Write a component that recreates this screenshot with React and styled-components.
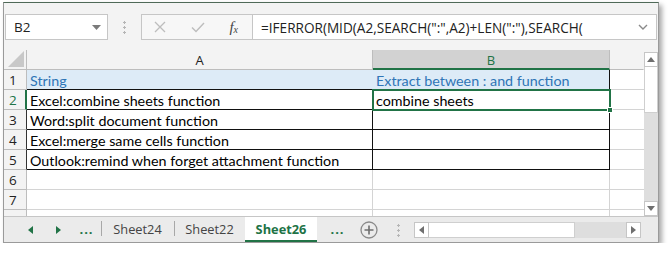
import React from "react";
import styled, { createGlobalStyle, css } from "styled-components";

const GlobalStyle = createGlobalStyle`
  * { box-sizing: border-box; }
  body {
    margin: 0;
    background: #fff;
    font-family: "Open Sans", "Noto Sans", sans-serif;
  }
`;

const GREEN = "#217346";
const GRID = "#d4d4d4";
const HEAD_LINE = "#bdbdbd";

const rows = [
  { a: "String", b: "Extract between : and function", head: true },
  { a: "Excel:combine sheets function", b: "combine sheets", selected: true },
  { a: "Word:split document function", b: "" },
  { a: "Excel:merge same cells function", b: "" },
  { a: "Outlook:remind when forget attachment function", b: "" },
  { a: "", b: "", plain: true },
  { a: "", b: "", plain: true },
];

const App = () => {
  return (
    <>
      <GlobalStyle />
      <Window>
        <FormulaBar>
          <NameBox>
            <span>B2</span>
            <svg width="9" height="5" viewBox="0 0 9 5">
              <path d="M0 0h9L4.5 5z" fill="#7a7a7a" />
            </svg>
          </NameBox>
          <Grip />
          <FormulaBox>
            <FxButtons>
              <svg width="14" height="14" viewBox="0 0 14 14">
                <path d="M2 2l10 10M12 2L2 12" stroke="#bdbdbd" strokeWidth="1.3" />
              </svg>
              <svg width="16" height="14" viewBox="0 0 16 14">
                <path d="M2 7.5l4 4L14 3" stroke="#bdbdbd" strokeWidth="1.4" fill="none" />
              </svg>
              <Fx>
                f<sub>x</sub>
              </Fx>
            </FxButtons>
            <FormulaText>
              <span>=IFERROR(MID(A2,SEARCH(":",A2)+LEN(":"),SEARCH(</span>
              <svg width="10" height="6" viewBox="0 0 10 6">
                <path d="M1 1l4 4 4-4" stroke="#8a8a8a" strokeWidth="1.4" fill="none" />
              </svg>
            </FormulaText>
          </FormulaBox>
        </FormulaBar>

        <SheetArea>
          <Sheet>
            <Corner>
              <svg width="16" height="16" viewBox="0 0 16 16">
                <path d="M16 0v16H0z" fill="#c8c8c8" />
              </svg>
            </Corner>
            <ColHead>A</ColHead>
            <ColHead $active>B</ColHead>
            <ColHead $last />

            {rows.map((r, i) => (
              <React.Fragment key={i}>
                <RowHead $active={r.selected} $boxed={!r.head && !r.plain}>
                  {i + 1}
                </RowHead>
                <Cell $head={r.head} $boxed={!r.plain} $left>
                  {r.a}
                </Cell>
                <Cell $head={r.head} $boxed={!r.plain} $selected={r.selected}>
                  {r.b}
                  {r.selected && <FillHandle />}
                </Cell>
                <Cell $last />
              </React.Fragment>
            ))}
            <RowHead $partial />
            <Cell $partial />
            <Cell $partial />
            <Cell $partial $last />
          </Sheet>

          <VScroll>
            <ScrollBtn>
              <svg width="8" height="5" viewBox="0 0 8 5">
                <path d="M0 5h8L4 0z" fill="#6f6f6f" />
              </svg>
            </ScrollBtn>
            <VThumb />
            <VTrack />
            <ScrollBtn>
              <svg width="8" height="5" viewBox="0 0 8 5">
                <path d="M0 0h8L4 5z" fill="#6f6f6f" />
              </svg>
            </ScrollBtn>
          </VScroll>
        </SheetArea>

        <TabBar>
          <NavArrow>
            <svg width="5" height="8" viewBox="0 0 5 8">
              <path d="M5 0v8L0 4z" fill={GREEN} />
            </svg>
          </NavArrow>
          <NavArrow>
            <svg width="5" height="8" viewBox="0 0 5 8">
              <path d="M0 0v8l5-4z" fill={GREEN} />
            </svg>
          </NavArrow>
          <More $w={29}>...</More>
          <Tab $sep $w={73}>Sheet24</Tab>
          <Tab $sep $w={71}>Sheet22</Tab>
          <Tab $active $w={72}>Sheet26</Tab>
          <More $w={41}>...</More>
          <AddSheet>
            <svg width="18" height="18" viewBox="0 0 18 18">
              <circle cx="9" cy="9" r="8" stroke="#8a8a8a" strokeWidth="1.3" fill="none" />
              <path d="M9 4.5v9M4.5 9h9" stroke="#6f6f6f" strokeWidth="1.6" />
            </svg>
          </AddSheet>
          <Grip $tab />
          <HScroll>
            <HBtn>
              <svg width="5" height="8" viewBox="0 0 5 8">
                <path d="M5 0v8L0 4z" fill="#6f6f6f" />
              </svg>
            </HBtn>
            <HThumb />
            <HTrack />
            <HBtn>
              <svg width="5" height="8" viewBox="0 0 5 8">
                <path d="M0 0v8l5-4z" fill="#6f6f6f" />
              </svg>
            </HBtn>
          </HScroll>
        </TabBar>
      </Window>
    </>
  );
};

const Window = styled.div`
  margin: 2px 0 0 3px;
  width: 656px;
  height: 241px;
  display: flex;
  flex-direction: column;
  background: #f3f3f3;
  border: 1px solid #9a9a9a;
  border-top-color: #4f6a58;
  box-shadow: 3px 3px 5px rgba(0, 0, 0, 0.35);
`;

const FormulaBar = styled.div`
  height: 47px;
  display: flex;
  align-items: flex-start;
  padding: 11px 1px 0 1px;
`;

const NameBox = styled.div`
  width: 103px;
  height: 26px;
  background: #fff;
  border: 1px solid #c6c6c6;
  display: flex;
  align-items: center;
  justify-content: space-between;
  padding: 0 6px 0 8px;
  font-size: 13.5px;
  color: #222;
`;

const Grip = styled.div`
  width: 3px;
  height: 14px;
  margin: ${(p) => (p.$tab ? "0 14px 0 17px" : "6px 15px 0 15px")};
  background: radial-gradient(circle, #b5b5b5 1px, transparent 1.2px) 0 0 / 3px 5px;
  align-self: ${(p) => (p.$tab ? "center" : "auto")};
`;

const FormulaBox = styled.div`
  flex: 1;
  height: 26px;
  display: flex;
  background: #fff;
  border: 1px solid #c6c6c6;
`;

const FxButtons = styled.div`
  width: 111px;
  display: flex;
  align-items: center;
  justify-content: space-between;
  padding: 0 14px 0 11px;
  border-right: 1px solid #c6c6c6;
  background: #f7f7f7;
`;

const Fx = styled.span`
  font-family: "Liberation Serif", serif;
  font-style: italic;
  font-size: 15px;
  color: #444;
  sub {
    font-size: 10px;
    vertical-align: -1px;
  }
`;

const FormulaText = styled.div`
  flex: 1;
  display: flex;
  align-items: center;
  justify-content: space-between;
  padding: 0 8px 0 8px;
  font-size: 13.6px;
  color: #222;
  white-space: nowrap;
  overflow: hidden;
`;

const SheetArea = styled.div`
  height: 166px;
  display: flex;
  background: #fff;
`;

const Sheet = styled.div`
  flex: 1;
  display: grid;
  grid-template-columns: 23px 346px 237px 34px;
  grid-template-rows: repeat(8, 20px) 6px;
  overflow: hidden;
`;

const Corner = styled.div`
  background: #f3f3f3;
  border-right: 1px solid ${HEAD_LINE};
  border-bottom: 1px solid ${HEAD_LINE};
  display: flex;
  align-items: flex-end;
  justify-content: flex-end;
  padding: 0 2px 2px 0;
`;

const ColHead = styled.div`
  background: ${(p) => (p.$active ? "#d2d2d2" : "#f3f3f3")};
  color: ${(p) => (p.$active ? GREEN : "#222")};
  border-right: 1px solid ${HEAD_LINE};
  border-bottom: ${(p) => (p.$active ? `2px solid ${GREEN}` : `1px solid ${HEAD_LINE}`)};
  ${(p) => p.$last && "border-right-color: transparent;"}
  display: flex;
  align-items: center;
  justify-content: center;
  font-size: 13px;
  padding-top: ${(p) => (p.$active ? "1px" : "0")};
`;

const RowHead = styled.div`
  background: #f3f3f3;
  color: ${(p) => (p.$active ? GREEN : "#222")};
  border-right: ${(p) =>
    p.$active ? `2px solid ${GREEN}` : `1px solid ${p.$boxed ? "#333" : HEAD_LINE}`};
  border-bottom: 1px solid ${HEAD_LINE};
  display: flex;
  align-items: center;
  padding-left: 5px;
  font-size: 13.5px;
  ${(p) => p.$partial && "border-bottom: none;"}
`;

const Cell = styled.div`
  position: relative;
  font-family: "Lato", "Open Sans", sans-serif;
  font-size: 14.3px;
  color: #000;
  display: flex;
  align-items: center;
  padding: 1px 0 0 3px;
  white-space: nowrap;
  border-right: 1px solid ${GRID};
  border-bottom: 1px solid ${GRID};
  ${(p) =>
    p.$boxed &&
    css`
      border-right-color: #111;
      border-bottom-color: #111;
    `}
  ${(p) =>
    p.$head &&
    css`
      background: #ddebf7;
      color: #2e75b6;
    `}
  ${(p) => p.$head && p.$left && "border-right-color: #ddebf7;"}
  ${(p) =>
    p.$selected &&
    css`
      outline: 2px solid ${GREEN};
      outline-offset: -1px;
      z-index: 1;
    `}
  ${(p) => p.$partial && "border-bottom: none;"}
  ${(p) => p.$last && "border-right: none;"}
`;

const FillHandle = styled.span`
  position: absolute;
  right: -4px;
  bottom: -4px;
  width: 6px;
  height: 6px;
  background: ${GREEN};
  border: 1px solid #fff;
`;

const VScroll = styled.div`
  width: 14px;
  display: flex;
  flex-direction: column;
  background: #f3f3f3;
  padding-top: 2px;
`;

const ScrollBtn = styled.div`
  height: 15px;
  background: #fff;
  border: 1px solid #c6c6c6;
  display: flex;
  align-items: center;
  justify-content: center;
`;

const VThumb = styled.div`
  height: 46px;
  background: #fff;
  border: 1px solid #cfcfcf;
  border-top: none;
`;

const VTrack = styled.div`
  flex: 1;
  background: #dedede;
`;

const TabBar = styled.div`
  height: 26px;
  display: flex;
  align-items: stretch;
  border-top: 1px solid #c6c6c6;
  background: #ebebeb;
  padding-left: 12px;
`;

const NavArrow = styled.div`
  width: 28px;
  display: flex;
  align-items: center;
  justify-content: center;
`;

const More = styled.div`
  width: ${(p) => p.$w}px;
  display: flex;
  align-items: center;
  justify-content: center;
  color: ${GREEN};
  font-weight: 700;
  font-size: 13px;
  letter-spacing: 1px;
  padding-bottom: 2px;
`;

const Tab = styled.div`
  display: flex;
  align-items: center;
  justify-content: center;
  width: ${(p) => p.$w}px;
  font-size: 12.8px;
  color: ${(p) => (p.$active ? GREEN : "#444")};
  font-weight: ${(p) => (p.$active ? 700 : 400)};
  background: ${(p) => (p.$active ? "#fff" : "transparent")};
  border-bottom: 2px solid ${(p) => (p.$active ? GREEN : "transparent")};
  position: relative;
  ${(p) =>
    p.$sep &&
    css`
      &::before {
        content: "";
        position: absolute;
        left: 0;
        top: 4px;
        bottom: 4px;
        border-left: 1px solid #a8a8a8;
      }
    `}
`;

const AddSheet = styled.div`
  width: 22px;
  display: flex;
  align-items: center;
  justify-content: center;
`;

const HScroll = styled.div`
  width: 227px;
  height: 16px;
  margin-top: 5px;
  display: flex;
`;

const HBtn = styled.div`
  width: 15px;
  background: #fff;
  border: 1px solid #c6c6c6;
  display: flex;
  align-items: center;
  justify-content: center;
`;

const HThumb = styled.div`
  width: 146px;
  background: #fff;
  border: 1px solid #cfcfcf;
  border-left: none;
`;

const HTrack = styled.div`
  flex: 1;
  background: #dedede;
`;

export default App;
